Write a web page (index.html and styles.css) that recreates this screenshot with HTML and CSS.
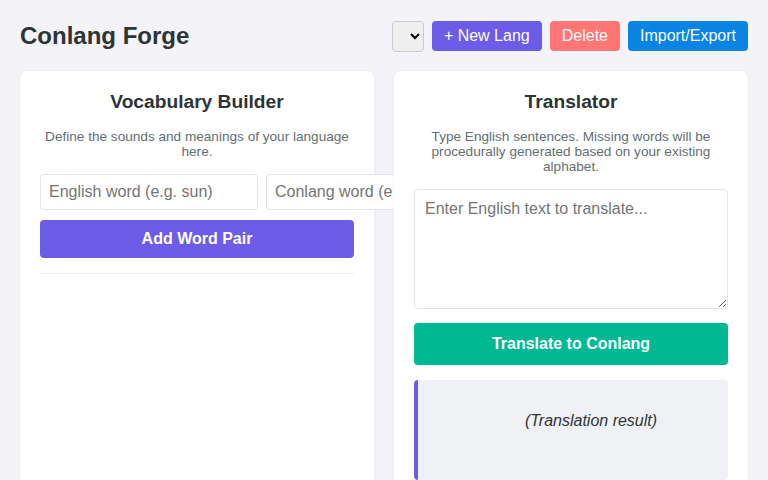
FILE: index.html
```html
<!DOCTYPE html>
<html lang="en">
<head>
  <meta charset="UTF-8" />
  <meta name="viewport" content="width=device-width, initial-scale=1.0"/>
  <title>Conlang Forge</title>
  <link rel="stylesheet" href="styles.css">
</head>
<body>
  <header>
    <h1>Conlang Forge</h1>
    <div class="controls">
      <select class="lang-select"></select>
      <button class="btn btn-purple">+ New Lang</button>
      <button class="btn btn-red">Delete</button>
      <button class="btn btn-blue">Import/Export</button>
    </div>
  </header>

  <main class="grid">
    <section class="card">
      <h2>Vocabulary Builder</h2>
      <p class="desc">Define the sounds and meanings of your language here.</p>
      <div class="word-row">
        <input type="text" placeholder="English word (e.g. sun)" />
        <input type="text" placeholder="Conlang word (e.g. sol)" />
      </div>
      <button class="wide-btn add-btn">Add Word Pair</button>
      <hr />
      <div class="word-list"></div>
    </section>

    <section class="card">
      <h2>Translator</h2>
      <p class="desc">Type English sentences. Missing words will be procedurally generated based on your existing alphabet.</p>
      <textarea placeholder="Enter English text to translate..."></textarea>
      <button class="wide-btn translate-btn">Translate to Conlang</button>
      <div class="result">(Translation result)</div>
    </section>
  </main>
</body>
</html>
```

FILE: styles.css
```css
body {
  font-family: 'Liberation Sans', Arial, sans-serif;
  margin: 0;
  padding: 20px;
  background-color: #f4f4f8;
  color: #2d3436;
}

header {
  display: flex;
  justify-content: space-between;
  align-items: center;
  margin-bottom: 19px;
}

header h1 {
  margin: 0;
  font-size: 24px;
  line-height: 32px;
}

.controls {
  display: flex;
  align-items: center;
  gap: 8px;
}

.lang-select {
  width: 32px;
  height: 31px;
  border: 1px solid #ccc;
  border-radius: 4px;
  background: #efefef;
}

.btn {
  font-family: inherit;
  font-size: 16px;
  color: white;
  border: none;
  border-radius: 4px;
  padding: 0 12px;
  height: 30px;
  cursor: pointer;
}

.btn-purple { background-color: #6c5ce7; }
.btn-red { background-color: #ff7675; }
.btn-blue { background-color: #0984e3; }

.grid {
  display: grid;
  grid-template-columns: minmax(0, 1fr) minmax(0, 1fr);
  gap: 20px;
}

.card {
  background: white;
  border-radius: 8px;
  padding: 20px;
  box-shadow: 0 1px 4px rgba(0,0,0,0.05);
  min-height: 420px;
}

.card h2 {
  margin: 0 0 16px;
  font-size: 19.2px;
  line-height: 22px;
  text-align: center;
}

.desc {
  margin: 0 0 15px;
  font-size: 13.6px;
  line-height: 15px;
  color: #636e72;
  text-align: center;
}

.word-row {
  display: flex;
  gap: 8px;
}

.word-row input {
  flex: none;
  width: 218px;
  box-sizing: border-box;
  height: 36px;
  padding: 8px;
  font-family: inherit;
  font-size: 16px;
  border: 1px solid #dfe6e9;
  border-radius: 4px;
}

.wide-btn {
  display: block;
  width: 100%;
  border: none;
  border-radius: 4px;
  color: white;
  font-family: inherit;
  font-size: 16px;
  font-weight: bold;
  cursor: pointer;
}

.add-btn {
  margin-top: 10px;
  height: 38px;
  background-color: #6c5ce7;
}

hr {
  border: none;
  border-top: 1px solid #f0f0f3;
  margin: 15px 0 0;
}

textarea {
  display: block;
  width: 100%;
  box-sizing: border-box;
  height: 120px;
  padding: 10px;
  font-family: inherit;
  font-size: 16px;
  border: 1px solid #dfe6e9;
  border-radius: 4px;
  resize: vertical;
}

.translate-btn {
  margin-top: 14px;
  height: 42px;
  background-color: #00b894;
}

.result {
  margin-top: 15px;
  min-height: 100px;
  box-sizing: border-box;
  padding: 32px 14px 20px 50px;
  background: #f0f1f5;
  border-left: 4px solid #6c5ce7;
  border-radius: 4px;
  font-size: 16px;
  line-height: 18px;
  font-style: italic;
  text-align: center;
  color: #2d3436;
}
```
